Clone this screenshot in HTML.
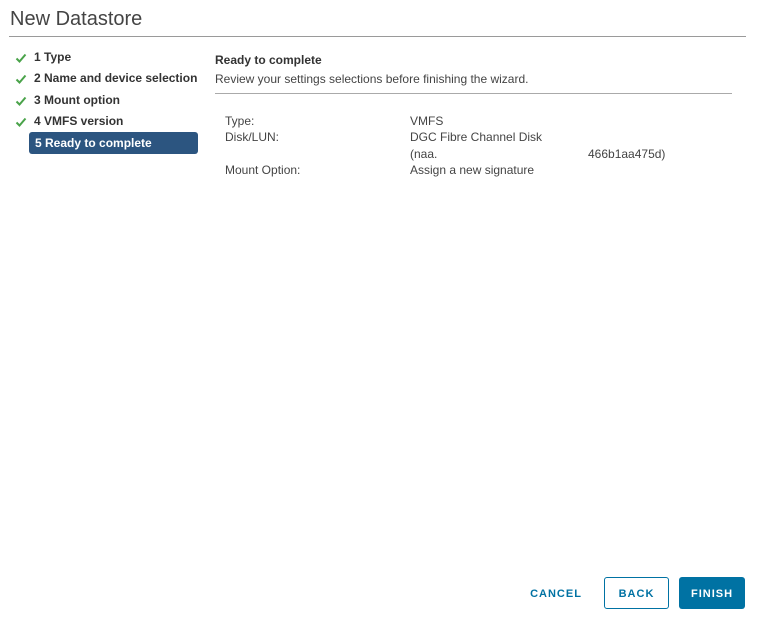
<!DOCTYPE html>
<html><head><style>
body{margin:0;width:761px;height:618px;background:#fff;font-family:"Liberation Sans",sans-serif;color:#333;position:relative;overflow:hidden}
.a{position:absolute;white-space:nowrap}
h1{position:absolute;left:10px;top:8px;margin:0;font-weight:normal;font-size:20px;color:#444}
.hr{position:absolute;height:1px;background:#9a9a9a}
.st{font-size:12px;font-weight:bold;color:#333}
.ck{position:absolute;left:15px;width:12px;height:12px}
.sel{position:absolute;left:29px;top:132px;width:169px;height:22px;background:#2c5580;border-radius:3px;color:#fff;font-size:12px;font-weight:bold;line-height:22px;padding-left:6px;box-sizing:border-box}
.t{font-size:12px;color:#444}
.btn{position:absolute;top:577px;height:32px;font-size:11px;font-weight:bold;letter-spacing:1px;line-height:34px;text-align:center;box-sizing:border-box;border-radius:3px}
</style></head><body>
<h1>New Datastore</h1>
<div class="hr" style="left:9px;top:36px;width:737px"></div>
<svg class="ck" style="top:52px" viewBox="0 0 12 12"><path d="M1.5 6.5L4.5 9.5L10.5 2.5" stroke="#4aa34a" stroke-width="2" fill="none"/></svg>
<svg class="ck" style="top:73px" viewBox="0 0 12 12"><path d="M1.5 6.5L4.5 9.5L10.5 2.5" stroke="#4aa34a" stroke-width="2" fill="none"/></svg>
<svg class="ck" style="top:95px" viewBox="0 0 12 12"><path d="M1.5 6.5L4.5 9.5L10.5 2.5" stroke="#4aa34a" stroke-width="2" fill="none"/></svg>
<svg class="ck" style="top:116px" viewBox="0 0 12 12"><path d="M1.5 6.5L4.5 9.5L10.5 2.5" stroke="#4aa34a" stroke-width="2" fill="none"/></svg>
<div class="a st" style="left:34px;top:50px">1 Type</div>
<div class="a st" style="left:34px;top:71px">2 Name and device selection</div>
<div class="a st" style="left:34px;top:93px">3 Mount option</div>
<div class="a st" style="left:34px;top:114px">4 VMFS version</div>
<div class="sel">5 Ready to complete</div>
<div class="a st" style="left:215px;top:53px">Ready to complete</div>
<div class="a t" style="left:215px;top:72px">Review your settings selections before finishing the wizard.</div>
<div class="hr" style="left:215px;top:93px;width:517px;background:#aaa"></div>
<div class="a t" style="left:225px;top:114px">Type:</div>
<div class="a t" style="left:225px;top:130px">Disk/LUN:</div>
<div class="a t" style="left:225px;top:163px">Mount Option:</div>
<div class="a t" style="left:410px;top:114px">VMFS</div>
<div class="a t" style="left:410px;top:130px">DGC Fibre Channel Disk</div>
<div class="a t" style="left:410px;top:147px">(naa.</div>
<div class="a t" style="left:588px;top:147px">466b1aa475d)</div>
<div class="a t" style="left:410px;top:163px">Assign a new signature</div>
<div class="btn" style="left:520px;width:72px;color:#0072a3">CANCEL</div>
<div class="btn" style="left:604px;width:65px;border:1px solid #0072a3;color:#0072a3;line-height:32px">BACK</div>
<div class="btn" style="left:679px;width:66px;background:#0072a3;color:#fff">FINISH</div>
</body></html>
